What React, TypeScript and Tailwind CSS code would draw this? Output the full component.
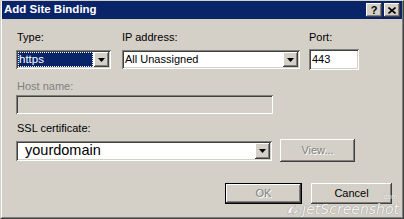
import React from "react";

const raised =
  "shadow-[inset_-1px_-1px_#404040,inset_1px_1px_#ffffff,inset_-2px_-2px_#808080,inset_2px_2px_#d4d0c8]";
const sunken =
  "shadow-[inset_1px_1px_#808080,inset_-1px_-1px_#ffffff,inset_2px_2px_#404040,inset_-2px_-2px_#d4d0c8]";

function Arrow() {
  return (
    <svg width="7" height="4" viewBox="0 0 7 4">
      <path d="M0 0 H7 L3.5 4 Z" fill="#000" />
    </svg>
  );
}

function DropBtn() {
  return (
    <div className={`w-[15px] self-stretch my-[2px] mr-[2px] bg-[#d4d0c8] flex items-center justify-center ${raised}`}>
      <Arrow />
    </div>
  );
}

export default function App() {
  return (
    <div
      className="relative w-[404px] h-[219px] bg-[#d4d0c8] border border-t-[#d4d0c8] border-l-[#d4d0c8] border-r-[#404040] border-b-[#404040] text-[11px] text-black"
      style={{ fontFamily: '"Liberation Sans", Arial, sans-serif' }}
    >
      <div className="h-full border-l border-r border-b border-l-white border-r-[#808080] border-b-[#808080] flex flex-col">
        {/* Title bar */}
        <div className="h-[18px] bg-[#0a246a] flex items-center pl-[2px] pr-[2px]">
          <span className="text-white font-bold text-[11.5px] leading-none flex-1">Add Site Binding</span>
          <div className="flex gap-[2px]">
            <div className={`w-[16px] h-[14px] bg-[#d4d0c8] flex items-center justify-center font-bold text-[11px] leading-none ${raised}`}>
              ?
            </div>
            <div className={`w-[16px] h-[14px] bg-[#d4d0c8] flex items-center justify-center ${raised}`}>
              <svg width="8" height="7" viewBox="0 0 8 7">
                <path d="M0.5 0.5 L7.5 6.5 M7.5 0.5 L0.5 6.5" stroke="#000" strokeWidth="1.6" />
              </svg>
            </div>
          </div>
        </div>

        {/* Content */}
        <div className="flex flex-col pl-[14px] pt-[12px]">
          <div className="flex">
            <div className="flex flex-col w-[95px]">
              <span className="leading-[13px] pl-[1px]">Type:</span>
              <div className={`mt-[6px] h-[19px] bg-white flex ${sunken}`}>
                <div className="flex-1 m-[2px] mr-[1px] bg-[#0a246a] text-white text-[11.5px] flex items-center pl-[1px] outline-1 outline-dotted outline-white -outline-offset-1 leading-none">
                  https
                </div>
                <DropBtn />
              </div>
            </div>
            <div className="flex flex-col w-[178px] ml-[11px]">
              <span className="leading-[13px]">IP address:</span>
              <div className={`mt-[6px] h-[19px] bg-white flex ${sunken}`}>
                <div className="flex-1 flex items-center pl-[3px] leading-none">All Unassigned</div>
                <DropBtn />
              </div>
            </div>
            <div className="flex flex-col w-[50px] ml-[9px]">
              <span className="leading-[13px]">Port:</span>
              <div className={`mt-[5px] h-[21px] bg-white flex items-center pl-[3px] leading-none ${sunken}`}>443</div>
            </div>
          </div>

          <span className="mt-[10px] leading-[13px] pl-[1px] text-[#808080]">Host name:</span>
          <div className={`mt-[2px] h-[19px] w-[257px] bg-[#d4d0c8] ${sunken}`} />

          <span className="mt-[8px] leading-[13px] pl-[1px]">SSL certificate:</span>
          <div className="mt-[4px] flex items-center">
            <div className={`h-[20px] w-[256px] bg-white flex ${sunken}`}>
              <div className="flex-1 flex items-center pl-[9px] text-[14.5px] leading-none">yourdomain</div>
              <DropBtn />
            </div>
            <div className={`ml-[8px] w-[75px] h-[23px] flex items-center justify-center ${raised} text-[#808080] [text-shadow:1px_1px_0_#ffffff]`}>
              View...
            </div>
          </div>

          <div className="mt-[21px] flex pl-[209px]">
            <div className="w-[77px] h-[21px] border border-black">
              <div className={`w-full h-full flex items-center justify-center text-[#808080] [text-shadow:1px_1px_0_#ffffff] ${raised}`}>
                OK
              </div>
            </div>
            <div className={`ml-[9px] w-[81px] h-[21px] flex items-center justify-center ${raised}`}>
              Cancel
            </div>
          </div>
        </div>
      </div>

      {/* Watermark overlay */}
      <div className="absolute right-[4px] bottom-[2px] flex items-end gap-[2px] opacity-80 pointer-events-none">
        <svg width="14" height="12" viewBox="0 0 14 12">
          <path d="M2 10 C1 6 5 1 10 2 C7 3 5 6 6 9 Z" fill="#ffffff" stroke="#9a9a9a" strokeWidth="0.6" />
          <path d="M7 10 C8 7 11 5 13 6 C11 8 10 10 7 10 Z" fill="#ffffff" stroke="#9a9a9a" strokeWidth="0.6" />
        </svg>
        <span
          className="italic text-[14px] leading-[14px] text-white [text-shadow:0_0_1px_#888,0_0_1px_#888]"
          style={{ fontFamily: '"DejaVu Sans", sans-serif' }}
        >
          jetScreenshot
        </span>
        <span className="absolute right-[2px] -top-[9px] text-[7px] leading-[8px] text-white [text-shadow:0_0_1px_#888]">.com</span>
      </div>
    </div>
  );
}
